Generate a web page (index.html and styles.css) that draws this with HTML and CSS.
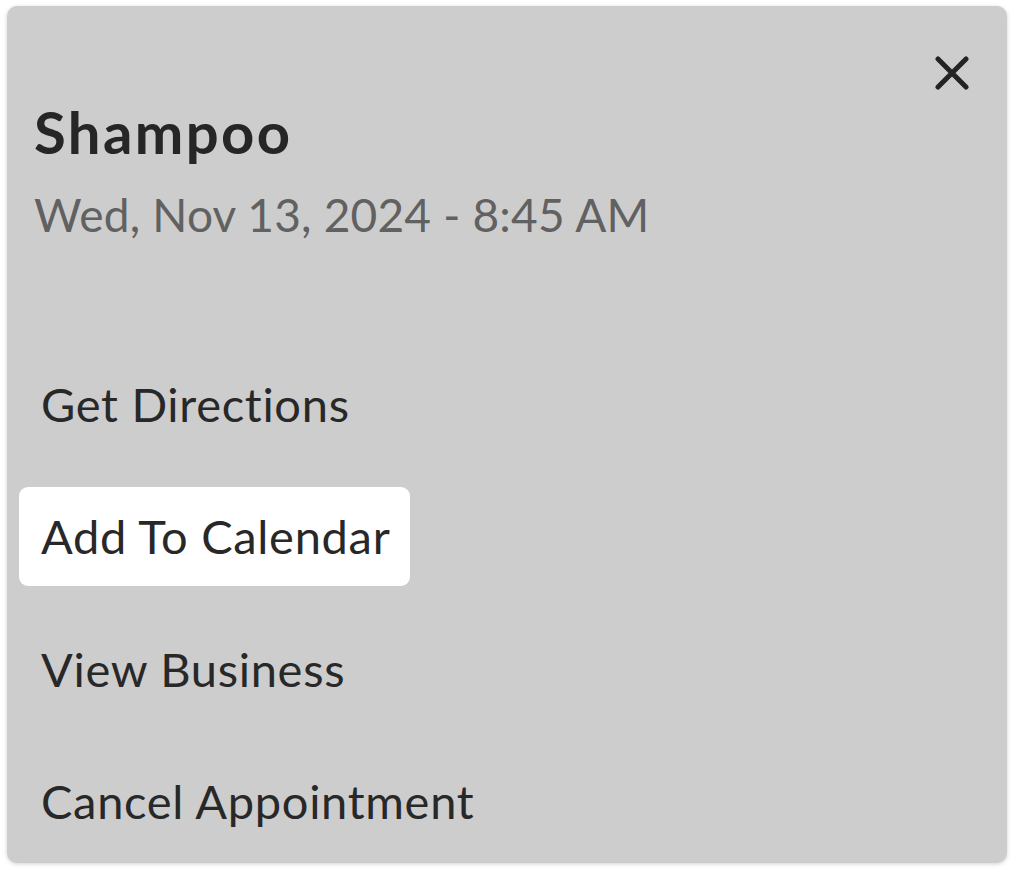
FILE: index.html
```html
<!DOCTYPE html>
<html lang="en">
<head>
    <meta charset="UTF-8">
    <title>Shampoo</title>
    <meta name="viewport" content="width=device-width, initial-scale=1.0">
    <link rel="stylesheet" href="styles.css">
</head>
<body>
    <div class="sheet">
        <button class="close" aria-label="Close">
            <svg width="34" height="34" viewBox="0 0 34 34">
                <path d="M3 3 L31 31 M31 3 L3 31" stroke="#232323" stroke-width="5" stroke-linecap="round"/>
            </svg>
        </button>
        <div class="header">
            <h1 class="title">Shampoo</h1>
            <p class="date">Wed, Nov 13, 2024 - 8:45 AM</p>
        </div>
        <ul class="actions">
            <li class="action">Get Directions</li>
            <li class="action active">Add To Calendar</li>
            <li class="action">View Business</li>
            <li class="action">Cancel Appointment</li>
        </ul>
    </div>
</body>
</html>
```

FILE: styles.css
```css
* {
    box-sizing: border-box;
    margin: 0;
    padding: 0;
}

body {
    background: #ffffff;
    font-family: Lato, "Open Sans", sans-serif;
    color: #262626;
    padding: 6px 8px 8px 7px;
}

.sheet {
    position: relative;
    height: 857px;
    background: #cdcdcd;
    border-radius: 10px;
    box-shadow: 0 1px 4px rgba(0, 0, 0, 0.18);
    padding: 93px 27px 0 27px;
}

.close {
    position: absolute;
    top: 50px;
    right: 38px;
    border: none;
    background: none;
    display: flex;
}

.title {
    font-size: 58px;
    font-weight: 700;
    line-height: 66px;
    letter-spacing: 2.4px;
    color: #262626;
}

.date {
    margin-top: 24px;
    font-size: 46px;
    line-height: 52px;
    letter-spacing: 0.2px;
    color: #616161;
}

.actions {
    list-style: none;
    margin: 113px 0 0 -15px;
    display: flex;
    flex-direction: column;
    gap: 33.5px;
}

.action {
    align-self: flex-start;
    height: 99px;
    display: flex;
    align-items: center;
    padding: 0 20px 0 22px;
    border-radius: 9px;
    font-size: 47px;
    letter-spacing: 0.7px;
    color: #282828;
}

.action.active {
    background: #ffffff;
}
```
